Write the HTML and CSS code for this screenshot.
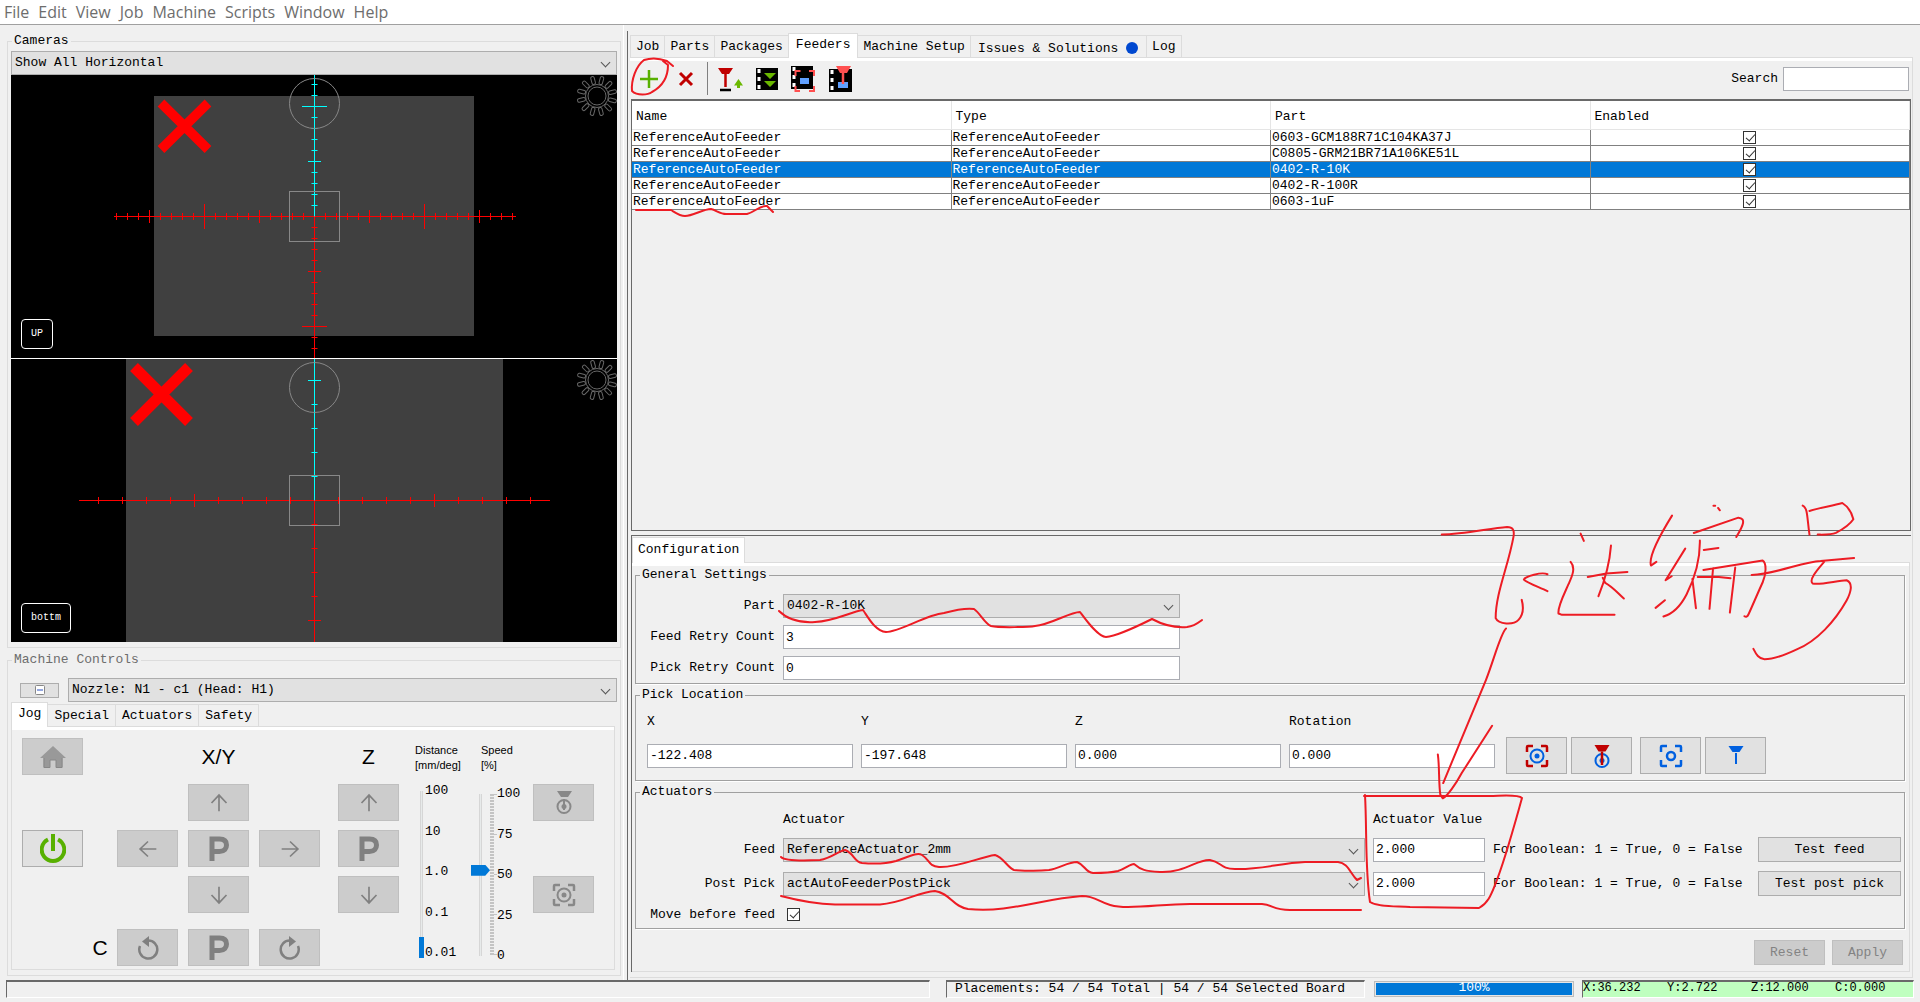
FILE: index.html
```html
<!DOCTYPE html>
<html lang="en">
<head>
<meta charset="utf-8">
<title>OpenPnP</title>
<link rel="stylesheet" href="styles.css">
</head>
<body>
<svg class="defs" aria-hidden="true">
  <defs>
    <symbol id="up" viewBox="0 0 24 24"><path d="M12 22V3M3 12l9-9.500 9 9.500" fill="none" stroke="#808080" stroke-width="2"/></symbol>
    <symbol id="down" viewBox="0 0 24 24"><path d="M12 2v19M3 12l9 9.500 9-9.500" fill="none" stroke="#808080" stroke-width="2"/></symbol>
    <symbol id="left" viewBox="0 0 24 24"><path d="M22 12H3M12 3l-9.500 9 9.500 9" fill="none" stroke="#808080" stroke-width="2"/></symbol>
    <symbol id="right" viewBox="0 0 24 24"><path d="M2 12h19M12 3l9.500 9-9.500 9" fill="none" stroke="#808080" stroke-width="2"/></symbol>
    <symbol id="park" viewBox="0 0 24 26"><path d="M5 25V3h7.500c5 0 7 2.500 7 6s-2 6.500-7 6.500H5" fill="none" stroke="#808080" stroke-width="5"/></symbol>
    <symbol id="ccw" viewBox="0 0 24 24"><path d="M4 10a9 9 0 1 0 8-5.500" fill="none" stroke="#808080" stroke-width="2.500"/><path d="M6 5.500L13 0v11z" fill="#808080"/></symbol>
    <symbol id="cw" viewBox="0 0 24 24"><path d="M20 10a9 9 0 1 1-8-5.500" fill="none" stroke="#808080" stroke-width="2.500"/><path d="M18 5.500L11 0v11z" fill="#808080"/></symbol>
    <symbol id="sun" viewBox="-22 -22 44 44">
      <g fill="none" stroke="#686868">
        <circle r="9"/><circle r="11.500"/>
        <g id="rays"><rect x="-1.500" y="-20" width="3.500" height="8" rx="1.500" transform="rotate(15)"/><rect x="-1.500" y="-20" width="3.500" height="8" rx="1.500" transform="rotate(45)"/><rect x="-1.500" y="-20" width="3.500" height="8" rx="1.500" transform="rotate(75)"/></g>
        <use href="#rays" transform="rotate(90)"/><use href="#rays" transform="rotate(180)"/><use href="#rays" transform="rotate(270)"/>
      </g>
    </symbol>
  </defs>
</svg>

<nav class="menu">
  <a href="#">File</a><a href="#">Edit</a><a href="#">View</a><a href="#">Job</a><a href="#">Machine</a><a href="#">Scripts</a><a href="#">Window</a><a href="#">Help</a>
</nav>

<main class="main">
  <section class="left">
    <fieldset class="group cameras">
      <legend>Cameras</legend>
      <span class="select"><select aria-label="Camera view"><option>Show All Horizontal</option></select></span>
      <div class="views">
        <div class="view">
          <svg viewBox="0 0 606 283">
            <rect x="143" y="21" width="320" height="240" fill="#404040"/>
            <path d="M150 28l47 46.500M197 28l-47 46.500" stroke="#f00" stroke-width="9.500"/>
            <g stroke="#f00">
              <path d="M103 141.500h402M303.500 141.500V283"/>
              <path d="M105 141.500h398" stroke-width="7" stroke-dasharray="1 10"/>
              <path d="M138 141.500h332" stroke-width="13" stroke-dasharray="1 54"/>
              <path d="M193 141.500h222" stroke-width="25" stroke-dasharray="1 219"/>
              <path d="M303.500 152v131" stroke-width="6" stroke-dasharray="1 10"/>
              <path d="M297 196.500h13M291 251.500h25"/>
            </g>
            <g stroke="#0ff">
              <path d="M303.500 0v141.500"/>
              <path d="M303.500 131V0" stroke-width="6" stroke-dasharray="1 10"/>
              <path d="M297 86.500h13M291 31.500h25"/>
            </g>
            <g fill="none" stroke="#888"><circle cx="303.500" cy="28.500" r="25"/><rect x="278.500" y="116.500" width="50" height="50"/></g>
            <use href="#sun" x="564" y="-1" width="44" height="44"/>
          </svg>
          <span class="tag">UP</span>
        </div>
        <div class="view">
          <svg viewBox="0 0 606 283">
            <rect x="115" y="0" width="377" height="283" fill="#404040"/>
            <path d="M123 8l55 55M178 8l-55 55" stroke="#f00" stroke-width="11"/>
            <g stroke="#f00">
              <path d="M68 141.500h471M303.500 141.500V283"/>
              <path d="M87 141.500h433" stroke-width="7" stroke-dasharray="1 23"/>
              <path d="M183 141.500h241" stroke-width="13" stroke-dasharray="1 239"/>
              <path d="M303.500 165v100" stroke-width="6" stroke-dasharray="1 23"/>
              <path d="M297 261.500h13"/>
            </g>
            <g stroke="#0ff">
              <path d="M303.500 0v141.500"/>
              <path d="M303.500 118V20" stroke-width="6" stroke-dasharray="1 23"/>
              <path d="M297 21.500h13"/>
            </g>
            <g fill="none" stroke="#888"><circle cx="303.500" cy="28.500" r="25"/><rect x="278.500" y="116.500" width="50" height="50"/></g>
            <use href="#sun" x="564" y="-1" width="44" height="44"/>
          </svg>
          <span class="tag">bottm</span>
        </div>
      </div>
    </fieldset>

    <fieldset class="group controls">
      <legend>Machine Controls</legend>
      <div class="tool-row">
        <button class="collapse" aria-label="Collapse"><svg width="10" height="10" viewBox="0 0 10 10"><rect x=".5" y=".5" width="9" height="9" rx="1" fill="#fff" stroke="#888"/><path d="M2 5h6" stroke="#2a50c0"/></svg></button>
        <span class="select"><select aria-label="Tool"><option>Nozzle: N1 - c1 (Head: H1)</option></select></span>
      </div>
      <div class="tabs" role="tablist">
        <button role="tab" class="tab active">Jog</button><button role="tab" class="tab">Special</button><button role="tab" class="tab">Actuators</button><button role="tab" class="tab">Safety</button>
      </div>
      <div class="jog">
        <div class="pad">
          <button class="key home" aria-label="Home"><svg width="26" height="22" viewBox="0 0 26 22"><path d="M13 0l13 12h-3.500v9.500H16V14h-6v7.500H3.500V12H0z" fill="#999"/><path d="M4 12v9.500h6V14h6v7.500h6V12" fill="none" stroke="#888"/></svg></button>
          <b class="axis xy">X/Y</b>
          <b class="axis z">Z</b>
          <button class="key y-up" aria-label="Y up"><svg width="20" height="22"><use href="#up"/></svg></button>
          <button class="key z-up" aria-label="Z up"><svg width="20" height="22"><use href="#up"/></svg></button>
          <button class="key power" aria-label="Power"><svg width="26" height="30" viewBox="0 0 26 30"><path d="M8 5.500a11.300 11.300 0 1 0 10 0" fill="none" stroke="#58b000" stroke-width="4"/><path d="M13 0v17" stroke="#58b000" stroke-width="4"/></svg></button>
          <button class="key x-left" aria-label="X left"><svg width="22" height="20"><use href="#left"/></svg></button>
          <button class="key xy-park" aria-label="Park X/Y"><svg width="24" height="26"><use href="#park"/></svg></button>
          <button class="key x-right" aria-label="X right"><svg width="22" height="20"><use href="#right"/></svg></button>
          <button class="key z-park" aria-label="Park Z"><svg width="24" height="26"><use href="#park"/></svg></button>
          <button class="key y-down" aria-label="Y down"><svg width="20" height="22"><use href="#down"/></svg></button>
          <button class="key z-down" aria-label="Z down"><svg width="20" height="22"><use href="#down"/></svg></button>
          <b class="axis c">C</b>
          <button class="key c-ccw" aria-label="Rotate counterclockwise"><svg width="24" height="24"><use href="#ccw"/></svg></button>
          <button class="key c-park" aria-label="Park C"><svg width="24" height="26"><use href="#park"/></svg></button>
          <button class="key c-cw" aria-label="Rotate clockwise"><svg width="24" height="24"><use href="#cw"/></svg></button>
        </div>
        <div class="slider distance">
          <label for="distance">Distance<br>[mm/deg]</label>
          <div class="scale">
            <input id="distance" type="range" min="0" max="4" value="0">
            <div class="marks"><span>100</span><span>10</span><span>1.0</span><span>0.1</span><span>0.01</span></div>
          </div>
        </div>
        <div class="slider speed">
          <label for="speed">Speed<br>[%]</label>
          <div class="scale">
            <input id="speed" type="range" min="0" max="100" value="53">
            <svg class="ticks" width="7" height="162" viewBox="0 0 7 162"><path d="M2 0v162" stroke="#c4c4c4" stroke-width="4" stroke-dasharray="2 1"/><path d="M5.500 0v162" stroke="#c4c4c4" stroke-width="3" stroke-dasharray="1 39"/></svg>
            <div class="marks"><span>100</span><span>75</span><span>50</span><span>25</span><span>0</span></div>
          </div>
        </div>
        <div class="aux">
          <button class="key" aria-label="Move nozzle to camera"><svg width="24" height="26" viewBox="0 0 24 26" fill="none" stroke="#888"><path d="M5 1h15l-4 6H9z" fill="#888" stroke="none"/><circle cx="12" cy="16.500" r="6.500" stroke-width="2"/><path d="M12 9v11" stroke-width="2"/><circle cx="12" cy="16.500" r="2.500" fill="#888" stroke="none"/></svg></button>
          <button class="key" aria-label="Move camera"><svg width="24" height="24" viewBox="0 0 24 24" fill="none" stroke="#888"><path d="M2 8V3q0-1 1-1h5M16 2h5q1 0 1 1v5M22 16v5q0 1-1 1h-5M8 22H3q-1 0-1-1v-5" stroke-width="2.500"/><circle cx="12" cy="12" r="6.500" stroke-width="2"/><circle cx="12" cy="12" r="2.500" fill="#888" stroke="none"/></svg></button>
        </div>
      </div>
    </fieldset>
  </section>

  <section class="right">
    <div class="tabs main-tabs" role="tablist">
      <button role="tab" class="tab">Job</button><button role="tab" class="tab">Parts</button><button role="tab" class="tab">Packages</button><button role="tab" class="tab active">Feeders</button><button role="tab" class="tab">Machine Setup</button><button role="tab" class="tab issues">Issues &amp; Solutions <i class="dot"></i></button><button role="tab" class="tab">Log</button>
    </div>
    <div class="feeders">
      <div class="toolbar">
        <button class="icon" aria-label="New feeder"><svg width="24" height="24" viewBox="0 0 24 24"><path d="M12 3v18M3 12h18" stroke="#58b000" stroke-width="2.500"/></svg></button>
        <button class="icon" aria-label="Delete feeder"><svg width="24" height="24" viewBox="0 0 24 24"><path d="M6 6l12 12M18 6L6 18" stroke="#c00000" stroke-width="3"/></svg></button>
        <span class="divider"></span>
        <button class="icon" aria-label="Pick"><svg width="26" height="26" viewBox="0 0 26 26"><path d="M1 2h15l-4 6H5z" fill="#c00000"/><path d="M8.500 8v13" stroke="#c00000" stroke-width="2.500"/><path d="M3 24h11" stroke="#000" stroke-width="2.500"/><path d="M21.500 13l4.500 6.500h-3V22h-3v-2.500h-3z" fill="#6ab800"/></svg></button>
        <button class="icon" aria-label="Feed"><svg width="26" height="26" viewBox="0 0 26 26"><rect x="2" y="2" width="22" height="22" fill="#000"/><path d="M3.500 3h3v4h-3zM3.500 11h3v4h-3zM3.500 19h3v4h-3z" fill="#fff"/><path d="M10 7h12l-6 6zM10 15h12l-6 6z" fill="#6ab800"/></svg></button>
        <button class="icon" aria-label="Move camera to pick location"><svg width="26" height="26" viewBox="0 0 26 26"><rect x="0" y="0" width="22" height="23" fill="#000"/><path d="M1.500 1h3v4h-3zM1.500 9h3v4h-3zM1.500 17h3v4h-3z" fill="#fff"/><rect x="9" y="12" width="9" height="6" fill="#60a0ff"/><path d="M4.500 10V5h5M18 5h5v5M23 20v5h-5M9 25H4.500v-5" fill="none" stroke="#ff5050" stroke-width="2"/></svg></button>
        <button class="icon" aria-label="Move nozzle to pick location"><svg width="26" height="26" viewBox="0 0 26 26"><rect x="1" y="3" width="23" height="23" fill="#000"/><path d="M2.500 4h3v4h-3zM2.500 12h3v4h-3zM2.500 20h3v4h-3z" fill="#fff"/><rect x="10" y="16" width="10" height="6" fill="#60a0ff"/><path d="M8 0h15l-4 7h-7z" fill="#ff5050"/><path d="M15 7v11" stroke="#ff5050" stroke-width="2.500"/></svg></button>
        <label class="search">Search <input type="text"></label>
      </div>
      <div class="table-box">
        <table>
          <thead><tr><th>Name</th><th>Type</th><th>Part</th><th>Enabled</th></tr></thead>
          <tbody>
            <tr><td>ReferenceAutoFeeder</td><td>ReferenceAutoFeeder</td><td>0603-GCM188R71C104KA37J</td><td><input type="checkbox" aria-label="Enabled" checked></td></tr>
            <tr><td>ReferenceAutoFeeder</td><td>ReferenceAutoFeeder</td><td>C0805-GRM21BR71A106KE51L</td><td><input type="checkbox" aria-label="Enabled" checked></td></tr>
            <tr class="selected"><td>ReferenceAutoFeeder</td><td>ReferenceAutoFeeder</td><td>0402-R-10K</td><td><input type="checkbox" aria-label="Enabled" checked></td></tr>
            <tr><td>ReferenceAutoFeeder</td><td>ReferenceAutoFeeder</td><td>0402-R-100R</td><td><input type="checkbox" aria-label="Enabled" checked></td></tr>
            <tr><td>ReferenceAutoFeeder</td><td>ReferenceAutoFeeder</td><td>0603-1uF</td><td><input type="checkbox" aria-label="Enabled" checked></td></tr>
          </tbody>
        </table>
      </div>

      <div class="config">
        <div class="tabs" role="tablist"><button role="tab" class="tab active">Configuration</button></div>
        <div class="config-body">
          <fieldset class="group etched">
            <legend>General Settings</legend>
            <div class="general">
              <label for="part">Part</label><span class="select"><select id="part"><option>0402-R-10K</option></select></span>
              <label for="feed-retry">Feed Retry Count</label><input id="feed-retry" type="text" value="3">
              <label for="pick-retry">Pick Retry Count</label><input id="pick-retry" type="text" value="0">
            </div>
          </fieldset>
          <fieldset class="group etched">
            <legend>Pick Location</legend>
            <div class="location">
              <label for="x">X</label><label for="y">Y</label><label for="z">Z</label><label for="rot">Rotation</label><span></span>
              <input id="x" type="text" value="-122.408"><input id="y" type="text" value="-197.648"><input id="z" type="text" value="0.000"><input id="rot" type="text" value="0.000">
              <div class="location-keys">
                <button class="key on" aria-label="Capture camera location"><svg width="24" height="24" viewBox="0 0 24 24" fill="none"><path d="M2 8V3q0-1 1-1h5M16 2h5q1 0 1 1v5M22 16v5q0 1-1 1h-5M8 22H3q-1 0-1-1v-5" stroke="#c00000" stroke-width="2.500"/><circle cx="12" cy="12" r="6.500" stroke="#0060e0" stroke-width="2"/><circle cx="12" cy="12" r="2.500" fill="#0060e0"/></svg></button>
                <button class="key on" aria-label="Capture nozzle location"><svg width="24" height="26" viewBox="0 0 24 26" fill="none"><circle cx="12" cy="17.500" r="6.500" stroke="#0060e0" stroke-width="2"/><circle cx="12" cy="17.500" r="2.500" fill="#0060e0"/><path d="M4.500 2h15l-4 6.500h-7z" fill="#c00000"/><path d="M12 8.500V22" stroke="#c00000" stroke-width="2.500"/></svg></button>
                <button class="key on gap" aria-label="Position camera"><svg width="24" height="24" viewBox="0 0 24 24" fill="none" stroke="#0060e0"><path d="M2 8V3q0-1 1-1h5M16 2h5q1 0 1 1v5M22 16v5q0 1-1 1h-5M8 22H3q-1 0-1-1v-5" stroke-width="2.500"/><circle cx="12" cy="12" r="4" stroke-width="2.500"/></svg></button>
                <button class="key on" aria-label="Position nozzle"><svg width="24" height="26" viewBox="0 0 24 26"><path d="M4.500 3h15l-4 6h-7z" fill="#0060e0"/><path d="M12 10v11" stroke="#0060e0" stroke-width="2"/></svg></button>
              </div>
            </div>
          </fieldset>
          <fieldset class="group etched">
            <legend>Actuators</legend>
            <div class="actuators">
              <span></span><span>Actuator</span><span class="wide">Actuator Value</span>
              <label for="feed">Feed</label><span class="select"><select id="feed"><option>ReferenceActuator_2mm</option></select></span><input type="text" aria-label="Feed value" value="2.000"><span>For Boolean: 1 = True, 0 = False</span><button class="push">Test feed</button>
              <label for="post">Post Pick</label><span class="select"><select id="post"><option>actAutoFeederPostPick</option></select></span><input type="text" aria-label="Post pick value" value="2.000"><span>For Boolean: 1 = True, 0 = False</span><button class="push">Test post pick</button>
              <label for="move">Move before feed</label><span class="check"><input id="move" type="checkbox" checked></span>
            </div>
          </fieldset>
          <div class="actions"><button class="push" disabled>Reset</button><button class="push" disabled>Apply</button></div>
        </div>
      </div>
    </div>
  </section>
</main>

<footer class="status">
  <div class="cell message"></div>
  <div class="cell placements">Placements: 54 / 54 Total | 54 / 54 Selected Board</div>
  <div class="progress" role="progressbar" aria-valuenow="100">100%</div>
  <div class="cell dro"><span>X:36.232</span><span>Y:2.722</span><span>Z:12.000</span><span>C:0.000</span></div>
</footer>

<svg class="ink" viewBox="0 0 1920 1002" aria-hidden="true">
  <path d="M673 66L667 61C659 58 650 58 644 60C636 66 631 80 632 91C637 96 648 95 652 92C663 86 668 76 668 65L663 61"/>
  <path d="M636 210H671C676 213 680 216 685 216C693 216 703 209 711 209C716 210 720 214 726 214H747C755 212 760 205 767 206L773 212"/>
  <path d="M779 611C788 620 800 623 815 622C835 621 850 612 863 610C868 617 875 631 886 632C900 632 925 615 944 613C955 610 966 608 974 609C980 613 985 624 991 626C1000 628 1030 627 1035 626C1050 625 1070 612 1080 612C1086 620 1098 637 1106 637C1118 636 1140 625 1152 619C1165 626 1175 628 1187 627C1195 626 1198 623 1202 620"/>
  <path d="M781 857C785 861 800 861 820 860C832 858 838 851 845 850C854 853 854 862 862 863C873 864 885 864 896 861C908 857 917 852 922 855C930 860 928 866 939 867C957 868 980 857 995 855C1003 857 1008 868 1014 870C1027 871 1040 871 1049 870C1060 868 1068 862 1077 862C1085 865 1085 872 1093 873C1105 873 1110 873 1118 871C1125 869 1130 864 1134 864C1141 870 1145 871 1160 872C1185 873 1197 859 1210 860C1222 862 1220 869 1235 869C1260 870 1280 863 1305 862H1338C1348 863 1350 873 1357 880L1361 878"/>
  <path d="M781 896C800 901 815 904 835 904.500H880C903 903 918 892 935 891C950 893 953 907 968 909C1010 913 1040 899 1082 896C1100 896 1100 907 1128 907C1150 907 1165 904 1190 904H1262C1273 905 1273 910 1290 910H1361"/>
  <g transform="translate(1360 480) scale(.357 .333)">
    <path d="M229 164C290 163 360 146 412 141C428 141 433 150 430 170C415 260 380 340 380 415C388 434 430 436 444 420C457 405 458 380 453 360M525 283C510 275 462 289 459 299C463 307 505 323 525 334M618 161L627 183M590 246C606 265 592 293 584 313C574 338 553 380 556 401L566 405H713M638 291L690 281L749 276M703 197C700 240 690 290 668 349M680 294L687 309C710 323 720 338 739 356"/>
    <path d="M874 107C852 145 806 225 815 257L830 246M911 206L856 301L873 289M828 384L854 361M990 77h5M1003 84l5 7M935 159L1060 113C1082 115 1074 137 1054 171M952 182C953 250 935 300 915 343C895 385 875 402 850 410M963 210L1004 204M931 297L941 385M962 270L1128 242C1140 250 1137 285 1128 307C1112 345 1095 388 1088 404C1085 411 1081 412 1077 409M989 265L979 387M1051 263L1036 398M946 291H1005L1038 295"/>
    <path d="M1240 77C1254 83 1252 110 1259 164M1259 93C1290 83 1320 78 1351 69C1370 82 1378 100 1382 118C1370 137 1349 150 1333 159C1320 165 1300 164 1282 164M1097 285C1165 283 1240 245 1290 243L1384 234M1300 246C1285 265 1255 300 1268 311C1290 316 1340 301 1363 301C1383 310 1374 340 1363 362C1330 425 1280 483 1225 508C1190 526 1158 538 1133 538C1117 537 1110 524 1102 507"/>
    <path d="M409 446C394 460 375 540 353 600L233 910M218 824C223 860 220 910 225 945L232 956C245 950 270 910 285 880L370 738"/>
  </g>
  <path d="M1365 795C1367 830 1365 870 1370 902C1378 907 1395 906 1410 907L1479 908C1488 903 1491 895 1495 885C1505 860 1513 830 1522 798C1518 794 1500 796 1490 796H1364"/>
</svg>
</body>
</html>
```
FILE: styles.css
```css
* { box-sizing: border-box; }

body {
  margin: 0;
  min-height: 100vh;
  display: flex;
  flex-direction: column;
  position: relative;
  background: #f0f0f0;
  color: #000;
  font: 13px/16px "Liberation Mono", monospace;
}

button, input, select { font: inherit; color: inherit; margin: 0; border-radius: 0; }
.defs { position: absolute; width: 0; height: 0; }

.menu {
  display: flex;
  gap: 9px;
  height: 25px;
  padding: 0 4px;
  background: #fff;
  border-bottom: 1px solid #a0a0a0;
  font: 16px/24px "Open Sans", "Noto Sans", sans-serif;
}
.menu a { color: #6d6d6d; text-decoration: none; }

.main { flex: 1; display: grid; grid-template-columns: 624px minmax(0, 1fr); }

.left {
  display: flex;
  flex-direction: column;
  gap: 4px;
  padding: 8px 2px 4px 7px;
  border-right: 1px solid #fff;
}

/* group boxes */
.group { min-width: 0; margin: 0; padding: 0 3px; border: 1px solid #dcdcdc; }
.group legend { margin-left: 1px; padding: 0 2px; height: 16px; background: #f0f0f0; }
.etched { border-color: #a0a0a0; box-shadow: 1px 1px #fff; }

/* form controls */
.select { position: relative; display: block; min-width: 0; flex: 1; }
.select select {
  appearance: none;
  display: block;
  width: 100%;
  height: 24px;
  padding: 0 24px 0 3px;
  background: #e1e1e1;
  border: 1px solid #adadad;
  line-height: 20px;
}
.select::after {
  content: "";
  position: absolute;
  right: 8px;
  top: 8px;
  width: 6px;
  height: 6px;
  border: solid #555;
  border-width: 0 1px 1px 0;
  transform: rotate(45deg);
  pointer-events: none;
}
input[type="text"] {
  width: 100%;
  min-width: 0;
  height: 24px;
  padding: 0 2px;
  background: #fff;
  border: 1px solid #abadb3;
}
input[type="checkbox"] {
  appearance: none;
  display: block;
  width: 13px;
  height: 13px;
  background: #fff;
  border: 1px solid #333;
}
input[type="checkbox"]:checked::after {
  content: "";
  display: block;
  width: 4px;
  height: 8px;
  margin: 0 0 0 4px;
  border: solid #333;
  border-width: 0 1px 1px 0;
  transform: rotate(42deg);
}
.push { height: 25px; padding: 0; background: #e1e1e1; border: 1px solid #adadad; }
.push:disabled { background: #ccc; border-color: #bfbfbf; color: #838383; }

/* tabs */
.tabs { display: flex; align-items: flex-end; height: 24px; position: relative; }
.tab {
  height: 22px;
  padding: 0 6px;
  background: #f0f0f0;
  border: 1px solid #dcdcdc;
  border-bottom: 0;
  border-right: 0;
  white-space: nowrap;
}
.tab:last-child { border-right: 1px solid #dcdcdc; }
.tab.active { height: 25px; margin-bottom: -1px; padding-bottom: 2px; background: #fff; border-right: 1px solid #dcdcdc; }
.tab.active + .tab { border-left: 0; }
.main-tabs .tab { padding: 0 5px; }
.main-tabs .active { padding: 0 7px 2px; }
.main-tabs .issues { padding: 4px 8px 0 7px; }
.dot { display: inline-block; width: 12px; height: 12px; border-radius: 50%; background: #0048d0; vertical-align: -2px; }

/* cameras */
.cameras { flex: 1; display: flex; flex-direction: column; padding-bottom: 5px; }
.cameras .select { flex: none; margin-top: 2px; }
.views { flex: 1; display: flex; flex-direction: column; gap: 1px; background: #fff; }
.view { position: relative; flex: 1; min-height: 200px; display: flex; background: #000; overflow: hidden; }
.view svg { flex: 1; min-width: 0; height: auto; }
.tag {
  position: absolute;
  left: 10px;
  bottom: 9px;
  padding: 6px 9px;
  border: 1px solid #fff;
  border-radius: 4px;
  color: #fff;
  font-size: 10px;
}

/* machine controls */
.controls legend { color: #6d6d6d; }
.controls { padding-bottom: 5px; }
.tool-row { display: flex; align-items: center; gap: 9px; padding: 10px 0 0 9px; }
.collapse { display: grid; place-items: center; width: 39px; height: 15px; padding: 0; background: #e1e1e1; border: 1px solid #adadad; }
.jog {
  display: flex;
  margin-right: 2px;
  padding: 11px 10px 3px;
  border: 1px solid #dcdcdc;
  box-shadow: inset 0 3px #fff;
}
.pad {
  display: grid;
  grid-template-columns: 61px 34px 61px 10px 61px 10px 61px 18px 61px;
  grid-template-rows: 37px 9px 37px 9px 37px 9px 37px 16px 37px;
}
.key {
  display: grid;
  place-items: center;
  width: 61px;
  height: 37px;
  padding: 0;
  background: #ccc;
  border: 1px solid #bfbfbf;
}
.key.on, .power { background: #e1e1e1; border-color: #adadad; }
.axis { font: 21px/37px "Liberation Sans", Arial, sans-serif; text-align: center; }
.home { grid-area: 1 / 1; }
.xy { grid-area: 1 / 5; }
.z { grid-area: 1 / 9; }
.y-up { grid-area: 3 / 5; }
.z-up { grid-area: 3 / 9; }
.power { grid-area: 5 / 1; }
.x-left { grid-area: 5 / 3; }
.xy-park { grid-area: 5 / 5; }
.x-right { grid-area: 5 / 7; }
.z-park { grid-area: 5 / 9; }
.y-down { grid-area: 7 / 5; }
.z-down { grid-area: 7 / 9; }
.c { grid-area: 9 / 2; }
.c-ccw { grid-area: 9 / 3; }
.c-park { grid-area: 9 / 5; }
.c-cw { grid-area: 9 / 7; }

.slider label { display: block; padding-top: 5px; font: 11px/15px "Liberation Sans", Arial, sans-serif; white-space: nowrap; }
.distance { width: 56px; margin-left: 16px; }
.speed { width: 62px; }
.speed label { padding-left: 10px; }
.scale { display: flex; align-items: center; height: 180px; }
.distance .scale { margin-top: 9px; padding-left: 4px; gap: 1px; }
.speed .scale { margin-top: 12px; }
.marks { display: flex; flex-direction: column; justify-content: space-between; height: 178px; }
input[type="range"] {
  appearance: none;
  writing-mode: vertical-lr;
  direction: rtl;
  height: 172px;
  background: linear-gradient(90deg, #d6d6d6 1px, #e7eaea 1px 2px, #d6d6d6 2px) center / 3px 162px no-repeat;
}
.distance input { width: 5px; }
.speed input { width: 19px; }
input[type="range"]::-webkit-slider-thumb { appearance: none; background: #0078d7; border: 0; border-radius: 0; }
.distance input::-webkit-slider-thumb { width: 5px; height: 21px; }
.speed input::-webkit-slider-thumb { width: 19px; height: 11px; clip-path: polygon(0 0, 75% 0, 100% 50%, 75% 100%, 0 100%); }
.aux { display: flex; flex-direction: column; gap: 55px; padding-top: 46px; }

/* right side */
.right {
  display: flex;
  flex-direction: column;
  min-width: 0;
  margin-left: 3px;
  margin-top: 6px;
  padding: 2px 7px 2px 2px;
  border-left: 1px solid #696969;
}
.feeders {
  flex: 1;
  display: flex;
  flex-direction: column;
  border: 1px solid #dcdcdc;
  border-left: 0;
  padding: 3px 1px 5px 1px;
  box-shadow: inset 0 3px #fff;
}
.toolbar { display: flex; align-items: center; height: 38px; padding: 0 2px 3px 5px; }
.icon { display: grid; place-items: center; width: 26px; height: 26px; margin-right: 11px; padding: 0; background: none; border: 0; }
.divider { width: 1px; height: 33px; margin: 0 9px 0 -3px; background: #808080; }
.search { display: flex; align-items: center; gap: 5px; margin-left: auto; }
.search input[type="text"] { width: 126px; }
.table-box { flex: 1; min-height: 140px; border: 1px solid #696969; border-width: 2px 1px 1px 1px; }
table { width: 100%; table-layout: fixed; border-spacing: 0; }
th {
  height: 29px;
  padding: 3px 5px 0 4px;
  background: #fff;
  border: solid #e5e5e5;
  border-width: 0 1px 1px 0;
  font-weight: normal;
  text-align: left;
}
td { height: 16px; padding: 0 1px; line-height: 15px; background: #fff; border: solid #808080; border-width: 0 1px 1px 0; white-space: nowrap; overflow: hidden; }
td input[type="checkbox"] { margin: 0 auto; }
.selected td { background: #0078d7; color: #fff; }
.selected input { color: #000; }

.config { margin-top: 4px; border-left: 1px solid #696969; border-top: 1px solid #696969; padding-top: 1px; }
.config .tabs { height: 25px; }
.config .tab { height: 26px; padding: 0 5px 2px; }
.config-body {
  display: flex;
  flex-direction: column;
  gap: 3px;
  margin-right: 1px;
  padding: 4px 4px 6px 3px;
  border: 1px solid #dcdcdc;
  border-left: 0;
  box-shadow: inset 0 3px #fff;
}
.general, .actuators { display: grid; gap: 7px 8px; align-items: center; }
.general { grid-template-columns: 128px minmax(0, 397px); padding: 11px 8px 3px; }
.general label, .actuators label { text-align: right; }
.location {
  display: grid;
  grid-template-columns: repeat(4, minmax(0, 206px)) auto;
  justify-content: start;
  align-items: center;
  gap: 7px 8px;
  padding: 11px 8px 6px;
}
.location-keys { display: flex; gap: 4px; padding-left: 3px; }
.location-keys .gap { margin-left: 4px; }
.actuators { grid-template-columns: 128px minmax(0, 1fr) 112px 257px 143px; gap: 9px 8px; padding: 12px 0 4px 8px; }
.wide { grid-column: span 3; }
.check { padding-left: 4px; height: 19px; display: flex; align-items: center; }
.actions { display: flex; justify-content: flex-end; gap: 7px; padding: 8px 2px 0 0; }
.actions .push { width: 71px; }

/* status bar */
.status { display: flex; align-items: stretch; height: 24px; padding: 0 6px 6px; white-space: nowrap; }
.cell { border: 1px solid #fff; border-top: 2px solid #696969; border-left: 1px solid #696969; line-height: 13px; }
.message { flex: 1; margin-right: 16px; }
.placements { width: 419px; padding: 0 8px; margin-right: 9px; overflow: hidden; }
.progress {
  width: 200px;
  margin: 1px 8px 1px 0;
  background: #0078d7;
  border: 1px solid #bcbcbc;
  box-shadow: inset 0 0 0 1px #e6e6e6;
  color: #fff;
  line-height: 12px;
  text-align: center;
}
.dro { display: grid; grid-template-columns: repeat(4, 84px); width: 332px; background: #bfffbf; font-size: 12px; overflow: hidden; }

/* hand-drawn markup over the window */
.ink { position: absolute; left: 0; top: 0; width: 100%; pointer-events: none; fill: none; stroke: #ed1c24; stroke-width: 2; stroke-linecap: round; stroke-linejoin: round; }
.ink path { vector-effect: non-scaling-stroke; }
```
